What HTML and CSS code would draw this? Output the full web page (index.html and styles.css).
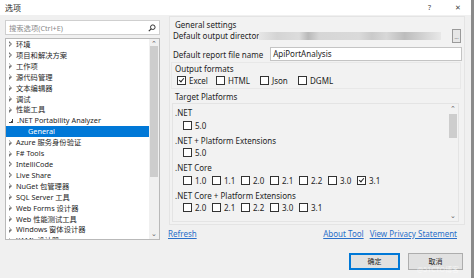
FILE: index.html
```html
<!DOCTYPE html>
<html lang="zh-CN">
  <head>
    <meta charset="utf-8"/>
    <title>选项</title>
    <link rel="stylesheet" href="styles.css">
  </head>
  <body>
    <div class="dialog">
      <div class="titlebar">
        <span class="title">选项</span>
        <span class="help">?</span>
        <span class="close">✕</span>
      </div>
      <div class="main">
        <div class="nav">
          <div class="search">
            <span>搜索选项(Ctrl+E)</span>
            <svg width="8" height="8" viewBox="0 0 8 8"><circle cx="4.8" cy="3.2" r="2.3" fill="none" stroke="#333" stroke-width="1"/><line x1="3.2" y1="4.8" x2="0.8" y2="7.2" stroke="#333" stroke-width="1.2"/></svg>
          </div>
          <div class="tree">
            <ul>
              <li><i class="tri"></i>环境</li>
              <li><i class="tri"></i>项目和解决方案</li>
              <li><i class="tri"></i>工作项</li>
              <li><i class="tri"></i>源代码管理</li>
              <li><i class="tri"></i>文本编辑器</li>
              <li><i class="tri"></i>调试</li>
              <li><i class="tri"></i>性能工具</li>
              <li><i class="tri open"></i>.NET Portability Analyzer</li>
              <li class="sub selected">General</li>
              <li><i class="tri"></i>Azure 服务身份验证</li>
              <li><i class="tri"></i>F# Tools</li>
              <li><i class="tri"></i>IntelliCode</li>
              <li><i class="tri"></i>Live Share</li>
              <li><i class="tri"></i>NuGet 包管理器</li>
              <li><i class="tri"></i>SQL Server 工具</li>
              <li><i class="tri"></i>Web Forms 设计器</li>
              <li><i class="tri"></i>Web 性能测试工具</li>
              <li><i class="tri"></i>Windows 窗体设计器</li>
              <li><i class="tri"></i>XAML 设计器</li>
            </ul>
            <div class="vscroll">
              <span class="arrow">⌃</span>
              <div class="thumb tall"></div>
              <span class="arrow down">⌄</span>
            </div>
          </div>
        </div>
        <div class="content">
          <div class="panel">
            <div class="heading">General settings</div>
            <div class="row">
              <span class="label clip">Default output directory</span>
              <span class="blurred"></span>
              <span class="browse">...</span>
            </div>
            <div class="row gap">
              <span class="label">Default report file name</span>
              <span class="input">ApiPortAnalysis</span>
            </div>
            <div class="group">
              <div class="heading">Output formats</div>
              <div class="checks">
                <span class="check w-excel"><i class="cb on"></i>Excel</span>
                <span class="check w-html"><i class="cb"></i>HTML</span>
                <span class="check w-json"><i class="cb"></i>Json</span>
                <span class="check"><i class="cb"></i>DGML</span>
              </div>
            </div>
            <div class="heading targets">Target Platforms</div>
            <div class="platforms">
              <div class="plist">
                <div class="ptitle">.NET</div>
                <div class="pitems">
                  <span class="ver"><i class="cb"></i>5.0</span>
                </div>
                <div class="ptitle">.NET + Platform Extensions</div>
                <div class="pitems">
                  <span class="ver"><i class="cb"></i>5.0</span>
                </div>
                <div class="ptitle">.NET Core</div>
                <div class="pitems">
                  <span class="ver"><i class="cb"></i>1.0</span>
                  <span class="ver"><i class="cb"></i>1.1</span>
                  <span class="ver"><i class="cb"></i>2.0</span>
                  <span class="ver"><i class="cb"></i>2.1</span>
                  <span class="ver"><i class="cb"></i>2.2</span>
                  <span class="ver"><i class="cb"></i>3.0</span>
                  <span class="ver"><i class="cb on"></i>3.1</span>
                </div>
                <div class="ptitle">.NET Core + Platform Extensions</div>
                <div class="pitems">
                  <span class="ver"><i class="cb"></i>2.0</span>
                  <span class="ver"><i class="cb"></i>2.1</span>
                  <span class="ver"><i class="cb"></i>2.2</span>
                  <span class="ver"><i class="cb"></i>3.0</span>
                  <span class="ver"><i class="cb"></i>3.1</span>
                </div>
              </div>
              <div class="vscroll light">
                <span class="arrow">⌃</span>
                <div class="thumb short"></div>
                <span class="arrow down">⌄</span>
              </div>
            </div>
          </div>
          <div class="links">
            <a href="#">Refresh</a>
            <span class="spacer"></span>
            <a href="#">About Tool</a>
            <a href="#">View Privacy Statement</a>
          </div>
        </div>
      </div>
      <div class="buttons">
        <span class="btn default">确定</span>
        <span class="btn">取消</span>
      </div>
      <span class="watermark">@51CTO博客</span>
    </div>
    <div class="edge"></div>
  </body>
</html>
```

FILE: styles.css
```css
body {
  margin: 0;
  width: 474px;
  height: 278px;
  display: flex;
  background: #7a7a7a;
  font-family: "Noto Sans", "Noto Sans CJK SC", sans-serif;
  font-size: 8px;
  color: #1e1e1e;
  overflow: hidden;
}
.dialog {
  position: relative;
  width: 471px;
  height: 278px;
  background: #f0f0f0;
}
.edge {
  width: 3px;
  background: #8a8a8a;
}
.titlebar {
  height: 15px;
  background: #ffffff;
  display: flex;
  align-items: center;
  padding-left: 5px;
}
.title {
  flex: 1;
  font-size: 8px;
}
.help {
  width: 27px;
  font-size: 7px;
  color: #444;
}
.close {
  width: 16px;
  font-size: 7px;
  color: #444;
}
.main {
  display: flex;
  height: 230px;
}
.nav {
  width: 155px;
  margin-left: 5px;
  padding-top: 5px;
}
.search {
  height: 13px;
  border: solid 1px #cfcfcf;
  background: #fff;
  display: flex;
  align-items: center;
  justify-content: space-between;
  padding: 0 3px 0 3px;
  color: #8a8a8a;
  font-size: 7.3px;
}
.tree {
  margin-top: 3px;
  height: 200px;
  border: solid 1px #b9b9b9;
  background: #fff;
  display: flex;
  overflow: hidden;
}
.tree ul {
  flex: 1;
  margin: 0;
  padding: 0;
  list-style: none;
}
.tree li {
  height: 10.92px;
  line-height: 10.92px;
  padding-left: 1px;
  white-space: nowrap;
  font-size: 7.3px;
  display: flex;
  align-items: center;
}
.tree li.sub {
  padding-left: 22px;
}
.tree li.selected {
  background: #0078d7;
  color: #fff;
}
.tri {
  width: 0;
  height: 0;
  margin: 0 4px 0 2px;
  border-left: solid 3.5px #777;
  border-top: solid 3px transparent;
  border-bottom: solid 3px transparent;
  position: relative;
}
.tri::after {
  content: "";
  position: absolute;
  left: -3px;
  top: -1.8px;
  border-left: solid 2px #fff;
  border-top: solid 1.8px transparent;
  border-bottom: solid 1.8px transparent;
}
.tri.open {
  border: none;
  width: 4px;
  height: 4px;
  background: linear-gradient(135deg, transparent 50%, #444 50%);
}
.tri.open::after {
  display: none;
}
.vscroll {
  width: 10px;
  display: flex;
  flex-direction: column;
  align-items: center;
  background: #f0f0f0;
}
.vscroll .arrow {
  height: 7px;
  line-height: 9px;
  font-size: 7px;
  color: #606060;
}
.vscroll .arrow.down {
  margin-top: auto;
  line-height: 3px;
}
.thumb {
  width: 8px;
  background: #cdcdcd;
}
.thumb.tall {
  height: 131px;
}
.thumb.short {
  height: 24px;
  margin-top: 3px;
}
.vscroll.light {
  background: transparent;
}
.content {
  width: 296px;
  margin-left: 9px;
  padding-top: 1px;
}
.panel {
  height: 201px;
  border: solid 1px #e4e4e4;
  background: #f2f2f2;
  padding: 3px 2px 3px 2px;
}
.heading {
  height: 9px;
  line-height: 9px;
  padding-left: 3px;
  white-space: nowrap;
}
.heading.targets {
  margin-top: 3px;
}
.row {
  display: flex;
  align-items: center;
  height: 13px;
  margin-top: 0;
}
.row.gap {
  margin-top: 5px;
  height: 14px;
}
.label {
  white-space: nowrap;
  padding-left: 1px;
}
.label.clip {
  width: 86px;
  overflow: hidden;
}
.blurred {
  width: 182px;
  height: 8px;
  background: linear-gradient(90deg, #e6e6e6 0, #d4d4d4 10%, #dcdcdc 22%, #b9b9b9 27%, #d6d6d6 33%, #dadada 55%, #cacaca 62%, #d8d8d8 70%, #bdbdbd 80%, #d2d2d2 90%, #e8e8e8 100%);
}
.browse {
  margin-left: 11px;
  width: 7px;
  height: 12px;
  border: solid 1px #9a9a9a;
  background: #e6e6e6;
  font-size: 5px;
  line-height: 14px;
  text-align: center;
  color: #555;
}
.input {
  margin-left: 7px;
  width: 190px;
  height: 12px;
  line-height: 12px;
  border: solid 1px #c4c4c4;
  background: #fff;
  padding-left: 2px;
}
.group {
  margin-top: 1px;
  height: 24px;
  padding-top: 1px;
  border: solid 1px #e8e8e8;
  margin-left: -1px;
  margin-right: 1px;
}
.checks {
  display: flex;
  align-items: center;
  height: 12px;
  margin-top: 1px;
  padding-left: 5px;
}
.check {
  display: flex;
  align-items: center;
  margin-right: 6px;
}
.w-excel {
  width: 33px;
}
.w-html {
  width: 38px;
}
.w-json {
  width: 32px;
}
.cb {
  width: 7px;
  height: 7px;
  border: solid 1px #333;
  background: #fff;
  margin-right: 3px;
  position: relative;
}
.cb.on::after {
  content: "";
  position: absolute;
  left: 2px;
  top: 0px;
  width: 2px;
  height: 4px;
  border-right: solid 1px #222;
  border-bottom: solid 1px #222;
  transform: rotate(40deg);
}
.platforms {
  margin-top: 2px;
  height: 117px;
  border: solid 1px #e4e4e4;
  display: flex;
  margin-right: 3px;
}
.plist {
  flex: 1;
  padding-top: 4px;
}
.ptitle {
  height: 10px;
  line-height: 10px;
  padding-left: 2px;
  margin-top: 5px;
}
.ptitle:first-child {
  margin-top: 0;
}
.pitems {
  display: flex;
  height: 10.5px;
  margin-top: 2px;
  padding-left: 10px;
  align-items: center;
}
.ver {
  width: 29px;
  display: flex;
  align-items: center;
}
.links {
  display: flex;
  margin-top: 4px;
  margin-left: -1px;
  height: 10px;
  line-height: 10px;
  padding-right: 8px;
}
.links a {
  color: #2a6fc9;
  margin-left: 6px;
}
.links a:first-child {
  margin-left: 0;
}
.spacer {
  flex: 1;
}
.buttons {
  display: flex;
  justify-content: flex-end;
  gap: 8px;
  padding: 8px 8px 0 0;
}
.btn {
  width: 53px;
  height: 15px;
  line-height: 15px;
  text-align: center;
  border: solid 1px #adadad;
  background: #e1e1e1;
  font-size: 7px;
}
.btn.default {
  width: 49px;
  border: solid 1px #0078d7;
  box-shadow: inset 0 0 0 1px #0078d7;
}
.watermark {
  position: absolute;
  right: 12px;
  bottom: 4px;
  font-size: 7px;
  color: rgba(255, 255, 255, 0.6);
}
```
